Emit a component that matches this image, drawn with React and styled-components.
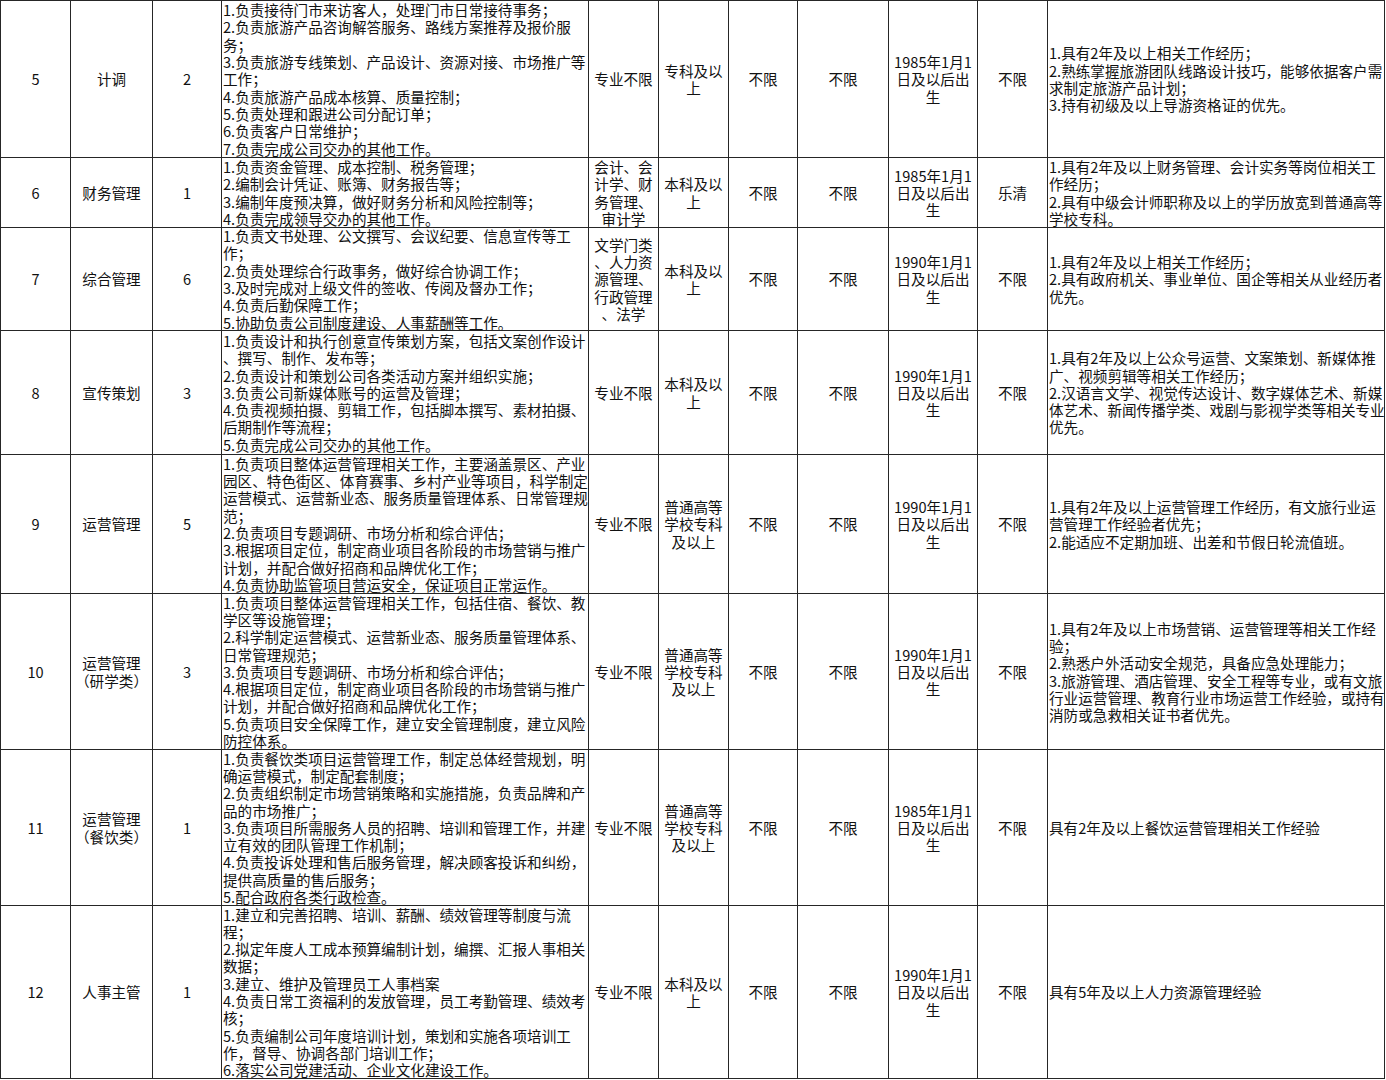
import React from 'react';
import styled, { createGlobalStyle } from 'styled-components';

const GlobalStyle = createGlobalStyle`
  html, body {
    margin: 0;
    padding: 0;
    background: #fff;
  }
  body {
    font-family: "Noto Sans CJK SC", "Noto Sans", sans-serif;
    font-size: 14.6px;
    color: #111;
  }
`;

const COLUMNS = [70, 82, 69, 367, 70, 70, 69, 91, 89, 70, 337];

const Sheet = styled('div')`
  display: grid;
  grid-template-columns: ${COLUMNS.map((w) => `${w}px`).join(' ')};
  grid-template-rows: ${(props) => props.$rows};
  width: max-content;
  border-left: 1px solid #262626;
  border-top: 1px solid #262626;
`;

const Cell = styled('div')`
  box-sizing: border-box;
  display: flex;
  flex-direction: column;
  justify-content: center;
  align-items: ${(props) => (props.$left ? 'flex-start' : 'center')};
  text-align: ${(props) => (props.$left ? 'left' : 'center')};
  padding: 0 ${(props) => (props.$left ? '1px' : '0')};
  border-right: 1px solid #262626;
  border-bottom: 1px solid #262626;
  overflow: hidden;
  white-space: nowrap;
  line-height: 17.3px;
`;

const Line = styled('span')`
  display: block;
`;

const rows = [
  {
    no: '5',
    height: 157,
    title: ['计调'],
    count: '2',
    duty: [
      '1.负责接待门市来访客人，处理门市日常接待事务；',
      '2.负责旅游产品咨询解答服务、路线方案推荐及报价服',
      '务；',
      '3.负责旅游专线策划、产品设计、资源对接、市场推广等',
      '工作；',
      '4.负责旅游产品成本核算、质量控制；',
      '5.负责处理和跟进公司分配订单；',
      '6.负责客户日常维护；',
      '7.负责完成公司交办的其他工作。',
    ],
    major: ['专业不限'],
    edu: ['专科及以', '上'],
    birth: ['1985年1月1', '日及以后出', '生'],
    place: '不限',
    need: [
      '1.具有2年及以上相关工作经历；',
      '2.熟练掌握旅游团队线路设计技巧，能够依据客户需',
      '求制定旅游产品计划；',
      '3.持有初级及以上导游资格证的优先。',
    ],
  },
  {
    no: '6',
    height: 70,
    title: ['财务管理'],
    count: '1',
    duty: [
      '1.负责资金管理、成本控制、税务管理；',
      '2.编制会计凭证、账簿、财务报告等；',
      '3.编制年度预决算，做好财务分析和风险控制等；',
      '4.负责完成领导交办的其他工作。',
    ],
    major: ['会计、会', '计学、财', '务管理、', '审计学'],
    edu: ['本科及以', '上'],
    birth: ['1985年1月1', '日及以后出', '生'],
    place: '乐清',
    need: [
      '1.具有2年及以上财务管理、会计实务等岗位相关工',
      '作经历；',
      '2.具有中级会计师职称及以上的学历放宽到普通高等',
      '学校专科。',
    ],
  },
  {
    no: '7',
    height: 103,
    title: ['综合管理'],
    count: '6',
    duty: [
      '1.负责文书处理、公文撰写、会议纪要、信息宣传等工',
      '作；',
      '2.负责处理综合行政事务，做好综合协调工作；',
      '3.及时完成对上级文件的签收、传阅及督办工作；',
      '4.负责后勤保障工作；',
      '5.协助负责公司制度建设、人事薪酬等工作。',
    ],
    major: ['文学门类', '、人力资', '源管理、', '行政管理', '、法学'],
    edu: ['本科及以', '上'],
    birth: ['1990年1月1', '日及以后出', '生'],
    place: '不限',
    need: [
      '1.具有2年及以上相关工作经历；',
      '2.具有政府机关、事业单位、国企等相关从业经历者',
      '优先。',
    ],
  },
  {
    no: '8',
    height: 124,
    title: ['宣传策划'],
    count: '3',
    duty: [
      '1.负责设计和执行创意宣传策划方案，包括文案创作设计',
      '、撰写、制作、发布等；',
      '2.负责设计和策划公司各类活动方案并组织实施；',
      '3.负责公司新媒体账号的运营及管理；',
      '4.负责视频拍摄、剪辑工作，包括脚本撰写、素材拍摄、',
      '后期制作等流程；',
      '5.负责完成公司交办的其他工作。',
    ],
    major: ['专业不限'],
    edu: ['本科及以', '上'],
    birth: ['1990年1月1', '日及以后出', '生'],
    place: '不限',
    need: [
      '1.具有2年及以上公众号运营、文案策划、新媒体推',
      '广、视频剪辑等相关工作经历；',
      '2.汉语言文学、视觉传达设计、数字媒体艺术、新媒',
      '体艺术、新闻传播学类、戏剧与影视学类等相关专业',
      '优先。',
    ],
  },
  {
    no: '9',
    height: 139,
    title: ['运营管理'],
    count: '5',
    duty: [
      '1.负责项目整体运营管理相关工作，主要涵盖景区、产业',
      '园区、特色街区、体育赛事、乡村产业等项目，科学制定',
      '运营模式、运营新业态、服务质量管理体系、日常管理规',
      '范；',
      '2.负责项目专题调研、市场分析和综合评估；',
      '3.根据项目定位，制定商业项目各阶段的市场营销与推广',
      '计划，并配合做好招商和品牌优化工作；',
      '4.负责协助监管项目营运安全，保证项目正常运作。',
    ],
    major: ['专业不限'],
    edu: ['普通高等', '学校专科', '及以上'],
    birth: ['1990年1月1', '日及以后出', '生'],
    place: '不限',
    need: [
      '1.具有2年及以上运营管理工作经历，有文旅行业运',
      '营管理工作经验者优先；',
      '2.能适应不定期加班、出差和节假日轮流值班。',
    ],
  },
  {
    no: '10',
    height: 156,
    title: ['运营管理', '（研学类）'],
    count: '3',
    duty: [
      '1.负责项目整体运营管理相关工作，包括住宿、餐饮、教',
      '学区等设施管理；',
      '2.科学制定运营模式、运营新业态、服务质量管理体系、',
      '日常管理规范；',
      '3.负责项目专题调研、市场分析和综合评估；',
      '4.根据项目定位，制定商业项目各阶段的市场营销与推广',
      '计划，并配合做好招商和品牌优化工作；',
      '5.负责项目安全保障工作，建立安全管理制度，建立风险',
      '防控体系。',
    ],
    major: ['专业不限'],
    edu: ['普通高等', '学校专科', '及以上'],
    birth: ['1990年1月1', '日及以后出', '生'],
    place: '不限',
    need: [
      '1.具有2年及以上市场营销、运营管理等相关工作经',
      '验；',
      '2.熟悉户外活动安全规范，具备应急处理能力；',
      '3.旅游管理、酒店管理、安全工程等专业，或有文旅',
      '行业运营管理、教育行业市场运营工作经验，或持有',
      '消防或急救相关证书者优先。',
    ],
  },
  {
    no: '11',
    height: 156,
    title: ['运营管理', '（餐饮类）'],
    count: '1',
    duty: [
      '1.负责餐饮类项目运营管理工作，制定总体经营规划，明',
      '确运营模式，制定配套制度；',
      '2.负责组织制定市场营销策略和实施措施，负责品牌和产',
      '品的市场推广；',
      '3.负责项目所需服务人员的招聘、培训和管理工作，并建',
      '立有效的团队管理工作机制；',
      '4.负责投诉处理和售后服务管理，解决顾客投诉和纠纷，',
      '提供高质量的售后服务；',
      '5.配合政府各类行政检查。',
    ],
    major: ['专业不限'],
    edu: ['普通高等', '学校专科', '及以上'],
    birth: ['1985年1月1', '日及以后出', '生'],
    place: '不限',
    need: ['具有2年及以上餐饮运营管理相关工作经验'],
  },
  {
    no: '12',
    height: 173,
    title: ['人事主管'],
    count: '1',
    duty: [
      '1.建立和完善招聘、培训、薪酬、绩效管理等制度与流',
      '程；',
      '2.拟定年度人工成本预算编制计划，编撰、汇报人事相关',
      '数据；',
      '3.建立、维护及管理员工人事档案',
      '4.负责日常工资福利的发放管理，员工考勤管理、绩效考',
      '核；',
      '5.负责编制公司年度培训计划，策划和实施各项培训工',
      '作，督导、协调各部门培训工作；',
      '6.落实公司党建活动、企业文化建设工作。',
    ],
    major: ['专业不限'],
    edu: ['本科及以', '上'],
    birth: ['1990年1月1', '日及以后出', '生'],
    place: '不限',
    need: ['具有5年及以上人力资源管理经验'],
  },
];

const Lines = ({ items }) => items.map((text, i) => <Line key={i}>{text}</Line>);

const JobRow = ({ row }) => (
  <>
    <Cell>{row.no}</Cell>
    <Cell>
      <Lines items={row.title} />
    </Cell>
    <Cell>{row.count}</Cell>
    <Cell $left>
      <Lines items={row.duty} />
    </Cell>
    <Cell>
      <Lines items={row.major} />
    </Cell>
    <Cell>
      <Lines items={row.edu} />
    </Cell>
    <Cell>不限</Cell>
    <Cell>不限</Cell>
    <Cell>
      <Lines items={row.birth} />
    </Cell>
    <Cell>{row.place}</Cell>
    <Cell $left>
      <Lines items={row.need} />
    </Cell>
  </>
);

const App = () => (
  <>
    <GlobalStyle />
    <Sheet $rows={rows.map((r) => `${r.height}px`).join(' ')}>
      {rows.map((row) => (
        <JobRow key={row.no} row={row} />
      ))}
    </Sheet>
  </>
);

export default App;
